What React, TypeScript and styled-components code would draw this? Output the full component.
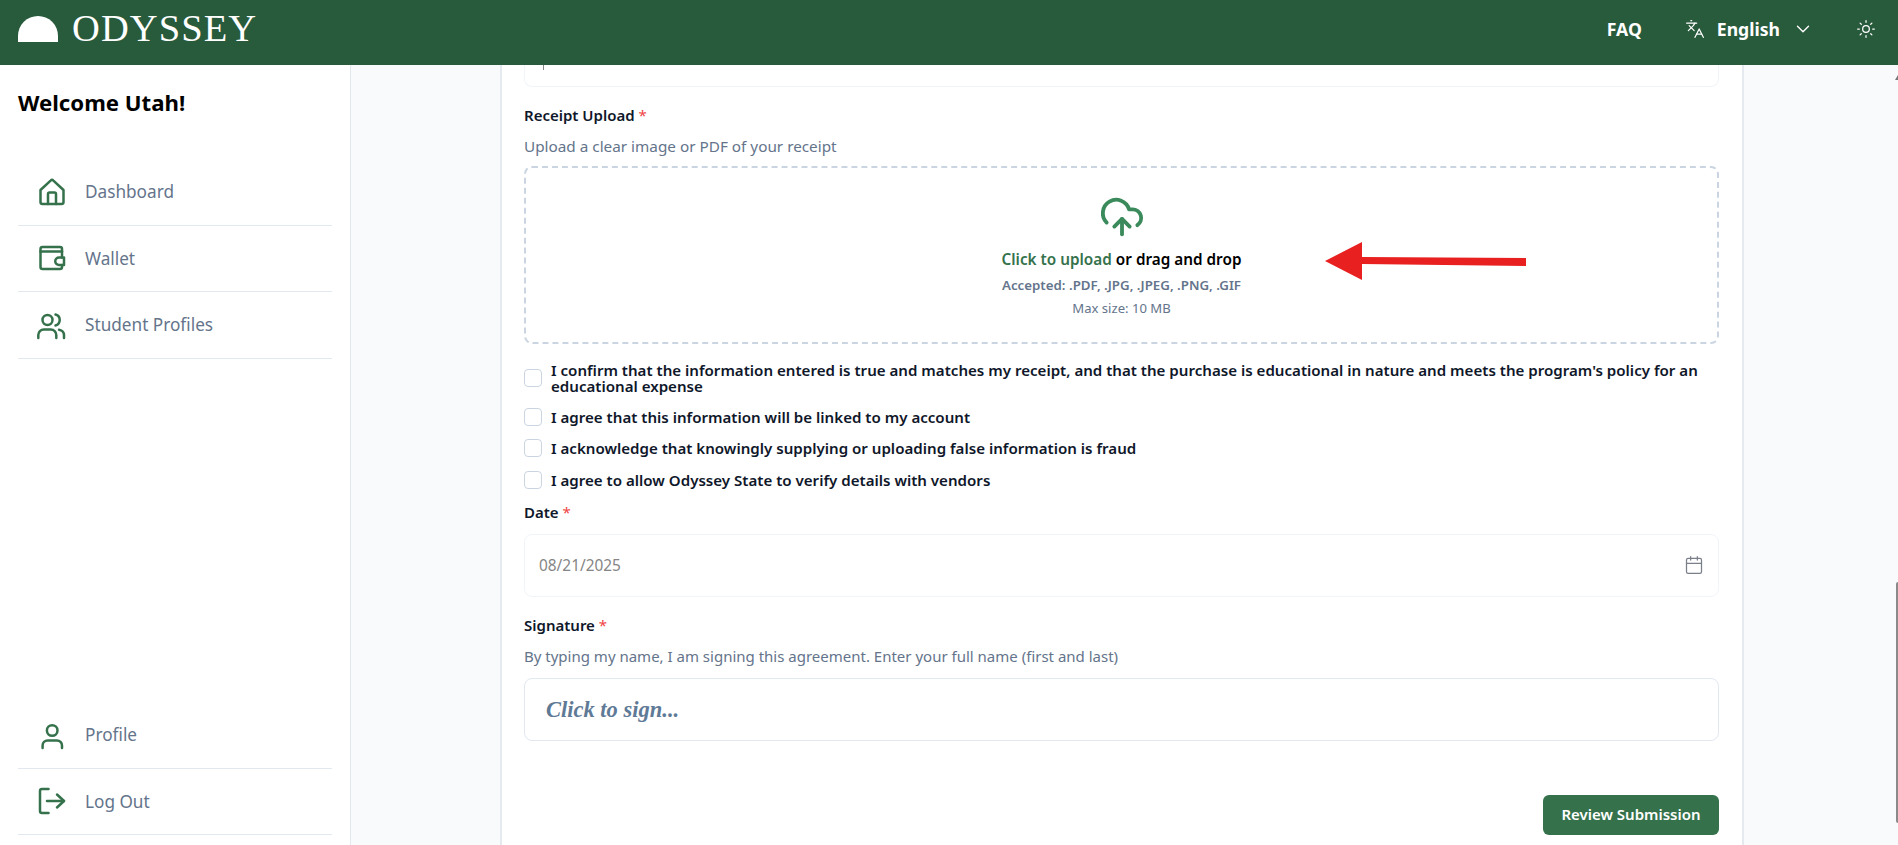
import React from "react";
import styled, { createGlobalStyle } from "styled-components";
import { Languages, ChevronDown, Sun, CloudUpload, Calendar } from "lucide-react";

const Global = createGlobalStyle`
  html, body { margin: 0; padding: 0; height: 100%; overflow: hidden; }
  body { font-family: "Noto Sans", "Liberation Sans", sans-serif; background: #f9fafb; }
  #root { height: 100%; }
  * { box-sizing: border-box; }
`;

const Page = styled.div`
  height: 845px;
  display: flex;
  flex-direction: column;
  position: relative;
`;

const Header = styled.header`
  height: 65px;
  flex: none;
  background: #285a3c;
  color: #fff;
  display: flex;
  align-items: center;
  padding: 0 22px 0 18px;
`;

const Logo = styled.div`
  display: flex;
  align-items: flex-end;
  gap: 14px;
  height: 26px;
  margin-top: -7px;
`;

const LogoText = styled.span`
  font-family: "Liberation Serif", serif;
  font-size: 38.5px;
  line-height: 26px;
  letter-spacing: 1.1px;
  position: relative;
  top: -1px;
`;

const HeaderRight = styled.div`
  margin-left: auto;
  margin-top: -7px;
  display: flex;
  align-items: center;
  font-size: 17.6px;
  font-weight: 700;
`;

const Faq = styled.span`
  margin-right: 43px;
`;

const Lang = styled.span`
  margin: 0 12px;
`;

const SunWrap = styled.span`
  display: flex;
  margin-left: 42px;
`;

const Body = styled.div`
  flex: 1;
  min-height: 0;
  display: flex;
`;

const Sidebar = styled.aside`
  width: 351px;
  flex: none;
  background: #fff;
  border-right: 1px solid #e2e8f0;
  padding: 0 18px 10px;
  display: flex;
  flex-direction: column;
`;

const Welcome = styled.h1`
  margin: 22px 0 0;
  font-size: 22.2px;
  line-height: 32px;
  font-weight: 700;
  color: #000;
`;

const Nav = styled.nav`
  margin-top: 40px;
  display: flex;
  flex-direction: column;
`;

const FootNav = styled(Nav)`
  margin-top: auto;
`;

const NavRow = styled.a`
  height: 66.5px;
  display: flex;
  align-items: center;
  gap: 17.5px;
  padding-left: 17.5px;
  border-bottom: 1px solid #e2e8f0;
  color: #64748b;
  font-size: 17.2px;
`;

const NavIcon = styled.svg.attrs({ viewBox: "0 0 32 32", width: 32, height: 32 })`
  flex: none;
  fill: none;
  stroke: #35724c;
  stroke-width: 2.5;
  stroke-linecap: round;
  stroke-linejoin: round;
`;

const Main = styled.main`
  flex: 1;
  min-width: 0;
  overflow: hidden;
  padding-left: 149px;
`;

const Card = styled.section`
  width: 1244px;
  min-height: 100%;
  background: #fff;
  border-left: 2px solid #e5e9f0;
  border-right: 2px solid #e5e9f0;
  padding: 0 23px 0 22px;
  display: flex;
  flex-direction: column;
`;

const StubField = styled.div`
  height: 22px;
  flex: none;
  border: 1px solid #f1f5f9;
  border-top: 0;
  border-radius: 0 0 8px 8px;
  padding-left: 18px;
`;

const Caret = styled.span`
  display: block;
  width: 1px;
  height: 5px;
  background: #888;
`;

const Label = styled.label<{ $top: number }>`
  display: block;
  margin-top: ${(p) => p.$top}px;
  font-size: 15px;
  line-height: 20px;
  font-weight: 600;
  color: #0f172a;
`;

const Star = styled.span`
  color: #ef4444;
  font-weight: 400;
`;

const Help = styled.p<{ $top: number; $size: number }>`
  margin: ${(p) => p.$top}px 0 0;
  font-size: ${(p) => p.$size}px;
  line-height: 20px;
  color: #64748b;
`;

const Drop = styled.div`
  position: relative;
  flex: none;
  margin-top: 10px;
  height: 178px;
  border: 2px dashed #cbd5e1;
  border-radius: 8px;
  display: flex;
  flex-direction: column;
  align-items: center;
  padding-top: 26px;
  svg.cloud { color: #3b8a5c; }
`;

const DropTitle = styled.div`
  margin-top: 8.5px;
  font-size: 15.3px;
  line-height: 20px;
  font-weight: 600;
  color: #000;
`;

const UploadLink = styled.span`
  color: #35724c;
`;

const Accepted = styled.div`
  margin-top: 7px;
  font-size: 13.3px;
  line-height: 18px;
  font-weight: 600;
  color: #64748b;
`;

const MaxSize = styled.div`
  margin-top: 5px;
  font-size: 13.1px;
  line-height: 18px;
  color: #64748b;
`;

const ArrowMark = styled.svg`
  position: absolute;
  left: 799px;
  top: 74px;
`;

const Checks = styled.div`
  margin-top: 18px;
  display: flex;
  flex-direction: column;
  gap: 13.5px;
`;

const Check = styled.div`
  display: flex;
  align-items: center;
  gap: 9px;
  font-size: 15.1px;
  line-height: 16px;
  font-weight: 600;
  color: #0f172a;
`;

const Box = styled.span`
  flex: none;
  width: 18px;
  height: 18px;
  border: 1px solid #cbd5e1;
  border-radius: 4px;
  background: #fff;
`;

const DateField = styled.div`
  margin-top: 12px;
  height: 63px;
  flex: none;
  border: 1px solid #f1f5f9;
  border-radius: 8px;
  display: flex;
  align-items: center;
  justify-content: space-between;
  padding: 0 14px 1px 14px;
  font-size: 15.4px;
  color: #858585;
  svg { color: #7b7f8a; }
`;

const SignField = styled.div`
  margin-top: 12px;
  height: 63px;
  flex: none;
  border: 1px solid #e2e8f0;
  border-radius: 8px;
  display: flex;
  align-items: center;
  padding-left: 21px;
  font-family: "Liberation Serif", serif;
  font-style: italic;
  font-weight: 700;
  font-size: 22.5px;
  color: #5f7a96;
`;

const Actions = styled.div`
  margin-top: 54px;
  display: flex;
  justify-content: flex-end;
`;

const Submit = styled.button`
  width: 176px;
  height: 40px;
  border: 0;
  border-radius: 6px;
  padding: 0 0 2px;
  background: #35724c;
  color: #fff;
  font: 600 15px "Noto Sans", sans-serif;
`;

const ScrollArrow = styled.span`
  position: absolute;
  right: 0;
  top: 75px;
  width: 0;
  height: 0;
  border-left: 3px solid transparent;
  border-bottom: 5px solid #777;
`;

const ScrollThumb = styled.span`
  position: absolute;
  right: 0;
  top: 582px;
  width: 2px;
  height: 241px;
  background: #8a8a8a;
  border-radius: 2px 0 0 2px;
`;

const checks = [
  "I confirm that the information entered is true and matches my receipt, and that the purchase is educational in nature and meets the program's policy for an educational expense",
  "I agree that this information will be linked to my account",
  "I acknowledge that knowingly supplying or uploading false information is fraud",
  "I agree to allow Odyssey State to verify details with vendors",
];

export default function App() {
  return (
    <Page>
      <Global />
      <Header>
        <Logo>
          <svg width="40" height="26" viewBox="0 0 40 26" fill="#fff">
            <path d="M0 26V20A20 20 0 0 1 40 20V26Z" />
          </svg>
          <LogoText>ODYSSEY</LogoText>
        </Logo>
        <HeaderRight>
          <Faq>FAQ</Faq>
          <Languages size={20} strokeWidth={1.5} />
          <Lang>English</Lang>
          <ChevronDown size={22} strokeWidth={1.5} />
          <SunWrap>
            <Sun size={20} strokeWidth={1.5} />
          </SunWrap>
        </HeaderRight>
      </Header>
      <Body>
        <Sidebar>
          <Welcome>Welcome Utah!</Welcome>
          <Nav>
            <NavRow>
              <NavIcon>
                <path d="M4.5 14L14.6 4.6a2 2 0 0 1 2.8 0L27.5 14V26a2 2 0 0 1-2 2H6.5a2 2 0 0 1-2-2Z" />
                <path d="M12 28V18a1.5 1.5 0 0 1 1.5-1.5h5a1.5 1.5 0 0 1 1.5 1.5V28" />
              </NavIcon>
              Dashboard
            </NavRow>
            <NavRow>
              <NavIcon>
                <path d="M26 15.5V7a2 2 0 0 0-2-2H6.5a2 2 0 0 0-2 2v18a2 2 0 0 0 2 2H24a2 2 0 0 0 2-2v-2" />
                <path d="M4.5 9.5H26" />
                <path d="M23 15.5h5v7.5h-5a3.75 3.75 0 0 1 0-7.5z" />
              </NavIcon>
              Wallet
            </NavRow>
            <NavRow>
              <NavIcon>
                <circle cx="11.5" cy="11" r="5" />
                <path d="M19.5 5.5a5.7 5.7 0 0 1 0 11" />
                <path d="M2.3 29V26a5.5 5.5 0 0 1 5.5-5.5h7a5.5 5.5 0 0 1 5.5 5.5v3" />
                <path d="M23 20.7a5.5 5.5 0 0 1 5 5.3v3" />
              </NavIcon>
              Student Profiles
            </NavRow>
          </Nav>
          <FootNav>
            <NavRow>
              <NavIcon>
                <circle cx="16.2" cy="11.5" r="5.3" />
                <path d="M6.6 29v-2.5a5 5 0 0 1 5-5h9.4a5 5 0 0 1 5 5V29" />
              </NavIcon>
              Profile
            </NavRow>
            <NavRow>
              <NavIcon>
                <path d="M12.5 4H6a2 2 0 0 0-2 2v20a2 2 0 0 0 2 2h6.5" />
                <path d="M11 16H28" />
                <path d="M21 9.5L28 16l-7 6.5" />
              </NavIcon>
              Log Out
            </NavRow>
          </FootNav>
        </Sidebar>
        <Main>
          <Card>
            <StubField><Caret /></StubField>
            <Label $top={18}>Receipt Upload <Star>*</Star></Label>
            <Help $top={11} $size={15.3}>Upload a clear image or PDF of your receipt</Help>
            <Drop>
              <CloudUpload className="cloud" size={46} strokeWidth={2} />
              <DropTitle><UploadLink>Click to upload</UploadLink> or drag and drop</DropTitle>
              <Accepted>Accepted: .PDF, .JPG, .JPEG, .PNG, .GIF</Accepted>
              <MaxSize>Max size: 10 MB</MaxSize>
              <ArrowMark width="203" height="40" viewBox="0 0 203 40" fill="#e8201f">
                <path d="M0 19L37 0V15L201 16V24L37 22V38Z" />
              </ArrowMark>
            </Drop>
            <Checks>
              {checks.map((c) => (
                <Check key={c}><Box />{c}</Check>
              ))}
              <Label $top={0}>Date <Star>*</Star></Label>
            </Checks>
            <DateField>
              08/21/2025
              <Calendar size={20} strokeWidth={1.5} />
            </DateField>
            <Label $top={18}>Signature <Star>*</Star></Label>
            <Help $top={11} $size={15}>By typing my name, I am signing this agreement. Enter your full name (first and last)</Help>
            <SignField>Click to sign...</SignField>
            <Actions><Submit>Review Submission</Submit></Actions>
          </Card>
        </Main>
      </Body>
      <ScrollArrow />
      <ScrollThumb />
    </Page>
  );
}
